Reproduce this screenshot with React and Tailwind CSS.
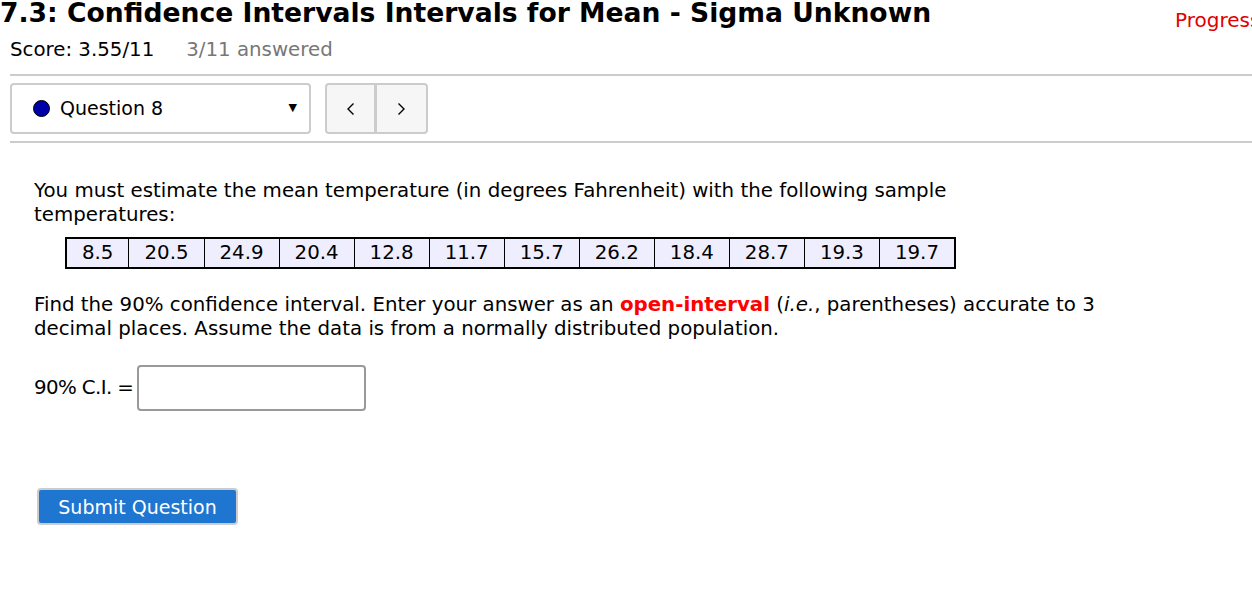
import { useState } from 'react'

const values = ['8.5', '20.5', '24.9', '20.4', '12.8', '11.7', '15.7', '26.2', '18.4', '28.7', '19.3', '19.7']

export default function App() {
  const [answer, setAnswer] = useState('')

  return (
    <div className="relative h-[612px] w-[1252px] overflow-hidden bg-white text-black" style={{ fontFamily: '"DejaVu Sans", Verdana, sans-serif' }}>
      <div className="absolute left-[1175px] top-[7px] whitespace-nowrap text-[20px] leading-[26px] text-[#e00000]">Progress</div>

      <h1 className="mt-[-5px] whitespace-nowrap text-[26.6px] font-bold leading-[36px]">
        7.3: Confidence Intervals Intervals for Mean - Sigma Unknown
      </h1>
      <div className="mt-[7px] flex pl-[10px] text-[19.8px] leading-[24px]">
        <span>Score: 3.55/11</span>
        <span className="ml-[32px] text-[#777]">3/11 answered</span>
      </div>

      <div className="ml-[10px] mt-[12px] border-t-2 border-[#ccc]" />

      <div className="ml-[10px] mt-[7px] flex items-center gap-[14px]">
        <div className="flex h-[51px] w-[301px] items-center rounded-[4px] border-2 border-[#ccc] pl-[21px] pr-[12px]">
          <span className="h-[17px] w-[17px] rounded-full border border-black bg-[#0000a8]" />
          <span className="ml-[10px] text-[19px]">Question 8</span>
          <span className="ml-auto text-[11px]">▼</span>
        </div>
        <div className="flex h-[51px] w-[103px] rounded-[4px] border-2 border-[#ccc] bg-[#f6f6f6]">
          <button className="flex w-1/2 items-center justify-center border-r-[3px] border-[#ccc]">
            <svg width="9" height="14" viewBox="0 0 9 14" fill="none" stroke="black" strokeWidth="1.4">
              <path d="M7.5 1.5 L2 7 L7.5 12.5" />
            </svg>
          </button>
          <button className="flex w-1/2 items-center justify-center">
            <svg width="9" height="14" viewBox="0 0 9 14" fill="none" stroke="black" strokeWidth="1.4">
              <path d="M1.5 1.5 L7 7 L1.5 12.5" />
            </svg>
          </button>
        </div>
      </div>

      <div className="ml-[10px] mt-[7px] border-t-2 border-[#ccc]" />

      <div className="pl-[34px] pt-[36px] text-[19.8px] leading-[24px]">
        <p className="w-[930px]">
          You must estimate the mean temperature (in degrees Fahrenheit) with the following sample temperatures:
        </p>
        <table className="ml-[31px] mt-[10px] border-collapse border-2 border-black bg-[#eeeeff]">
          <tbody>
            <tr>
              {values.map((v, i) => (
                <td key={i} className="border border-black px-[15px] py-0 text-center leading-[28px]">
                  {v}
                </td>
              ))}
            </tr>
          </tbody>
        </table>

        <p className="mt-[24px] w-[1070px]">
          Find the 90% confidence interval. Enter your answer as an{' '}
          <span className="font-bold text-[#ff0000]">open-interval</span> (<i>i.e.</i>, parentheses) accurate to 3
          decimal places. Assume the data is from a normally distributed population.
        </p>

        <div className="mt-[24px] flex items-center">
          <span className="tracking-[-0.6px]">90% C.I. =</span>
          <input
            value={answer}
            onChange={(e) => setAnswer(e.target.value)}
            className="ml-[4px] h-[46px] w-[229px] rounded-[4px] border-2 border-[#999] bg-white px-2 outline-none"
          />
        </div>

        <button className="ml-[3px] mt-[77px] h-[37px] w-[201px] rounded-[4px] border-2 border-[#ccc] bg-[#1f76d0] text-[19px] text-white">
          Submit Question
        </button>
      </div>
    </div>
  )
}
